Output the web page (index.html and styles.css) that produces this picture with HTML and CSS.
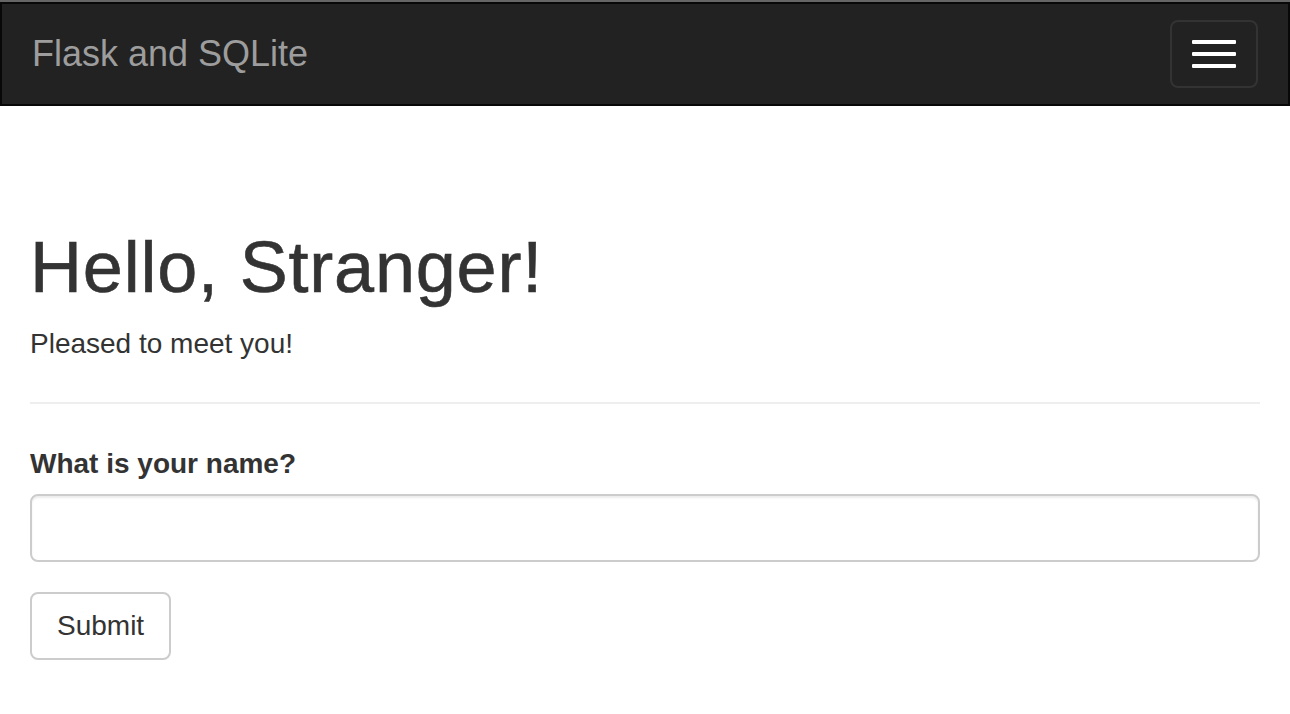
FILE: index.html
```html
<!DOCTYPE html>
<html lang="en">
<head>
<meta charset="utf-8">
<title>Flask and SQLite</title>
<link rel="stylesheet" href="styles.css">
</head>
<body>
<nav class="navbar">
  <a class="brand" href="#">Flask and SQLite</a>
  <button class="toggle" type="button" aria-label="Toggle navigation">
    <span class="bar"></span>
    <span class="bar"></span>
    <span class="bar"></span>
  </button>
</nav>
<main class="container">
  <div class="page-header">
    <h1 class="title">Hello, Stranger!</h1>
    <p class="lead">Pleased to meet you!</p>
  </div>
  <form class="form">
    <div class="form-group">
      <label class="label" for="name">What is your name?</label>
      <input class="input" id="name" type="text">
    </div>
    <button class="btn" type="submit">Submit</button>
  </form>
</main>
</body>
</html>
```

FILE: styles.css
```css
html, body {
  margin: 0;
  padding: 0;
  background: #fff;
}

body {
  font-family: "Liberation Sans", Arial, Helvetica, sans-serif;
  font-size: 28px;
  line-height: 40px;
  color: #333;
}

.navbar {
  margin-top: 2px;
  box-shadow: 0 -2px 0 #666;
  background: #222;
  border: 2px solid #080808;
  height: 100px;
  display: flex;
  justify-content: space-between;
  align-items: flex-start;
  padding: 0 30px;
}

.brand {
  display: block;
  color: #9d9d9d;
  text-decoration: none;
  font-size: 36px;
  line-height: 40px;
  padding: 30px 0;
}

.toggle {
  margin-top: 16px;
  background: transparent;
  border: 2px solid #333;
  border-radius: 8px;
  padding: 18px 20px;
  display: flex;
  flex-direction: column;
  gap: 8px;
  cursor: pointer;
}

.bar {
  display: block;
  width: 44px;
  height: 4px;
  border-radius: 1px;
  background: #fff;
}

.container {
  padding: 0 30px;
}

.page-header {
  padding-top: 122px;
  padding-bottom: 18px;
  border-bottom: 2px solid #eee;
  margin-bottom: 40px;
}

.title {
  margin: 0 0 17px;
  font-size: 72px;
  line-height: 79px;
  font-weight: 500;
  letter-spacing: 0.8px;
  -webkit-text-stroke: 0.6px #333;
}

.lead {
  margin: 0 0 20px;
}

.form-group {
  margin-bottom: 30px;
}

.label {
  display: block;
  font-weight: bold;
  margin-bottom: 10px;
}

.input {
  display: block;
  box-sizing: border-box;
  width: 100%;
  height: 68px;
  padding: 12px 24px;
  font-family: inherit;
  font-size: 28px;
  color: #555;
  background: #fff;
  border: 2px solid #ccc;
  border-radius: 8px;
  box-shadow: inset 0 2px 2px rgba(0, 0, 0, 0.075);
  outline: none;
}

.btn {
  font-family: inherit;
  font-size: 28px;
  line-height: 40px;
  color: #333;
  background: #fff;
  border: 2px solid #ccc;
  border-radius: 8px;
  padding: 12px 25px;
  cursor: pointer;
}
```
